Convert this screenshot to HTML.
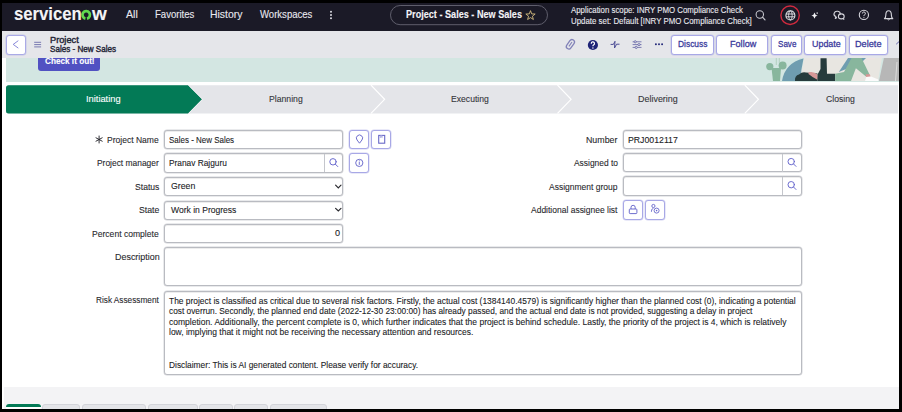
<!DOCTYPE html>
<html><head><meta charset="utf-8">
<style>
html,body{margin:0;padding:0;}
body{width:902px;height:412px;background:#000;position:relative;overflow:hidden;font-family:"Liberation Sans",sans-serif;}
.a{position:absolute;box-sizing:border-box;}
.t{position:absolute;line-height:0;transform-origin:0 0;white-space:pre;font-family:"Liberation Sans",sans-serif;-webkit-text-stroke:0.1px currentColor;}
.inp{position:absolute;box-sizing:border-box;background:#fff;border:1px solid #b9bbc1;border-radius:3px;box-shadow:inset 0 1px 0 rgba(0,0,0,0.07),0 0 0 0.5px rgba(185,187,193,0.6);}
.btn{position:absolute;box-sizing:border-box;background:#fff;border:1px solid #a8a8e6;border-radius:3px;box-shadow:0 0 0 0.5px rgba(168,168,230,0.5);}
svg{position:absolute;overflow:visible;}
</style></head><body>
<!-- nav -->
<div class="a" style="left:2px;top:3px;width:897px;height:28px;background:#1b1a27;"></div>
<!-- logo -->
<svg style="left:0;top:0" width="902" height="32">
  <!-- green o -->
  <path d="M85.42 18.57 A3.75 3.75 0 1 1 86.98 18.57" fill="none" stroke="#62d84e" stroke-width="2.8"/>
  <!-- kebab -->
  <circle cx="331" cy="11.7" r="0.95" fill="#e8e8ee"/>
  <circle cx="331" cy="15" r="0.95" fill="#e8e8ee"/>
  <circle cx="331" cy="18.3" r="0.95" fill="#e8e8ee"/>
  <!-- pill -->
  <rect x="390.5" y="5.5" width="157" height="19.2" rx="9.6" fill="none" stroke="#5f5e6c" stroke-width="1"/>
  <!-- star -->
  <path d="M530.50 10.65 L531.70 13.89 L535.16 14.04 L532.45 16.18 L533.38 19.51 L530.50 17.60 L527.62 19.51 L528.55 16.18 L525.84 14.04 L529.30 13.89 Z" fill="none" stroke="#cbb47a" stroke-width="0.95" stroke-linejoin="round"/>
  <!-- search -->
  <circle cx="759.8" cy="14.5" r="3.7" fill="none" stroke="#c9c9d0" stroke-width="1.05"/>
  <line x1="762.5" y1="17.2" x2="765.0" y2="19.9" stroke="#c9c9d0" stroke-width="1.2" stroke-linecap="round"/>
  <!-- globe w/ red ring -->
  <circle cx="790.1" cy="15.25" r="9.2" fill="none" stroke="#d02a3e" stroke-width="1.45"/>
  <circle cx="790.4" cy="15.4" r="4.5" fill="none" stroke="#e2e2e6" stroke-width="1.1"/>
  <ellipse cx="790.4" cy="15.4" rx="1.8" ry="4.5" fill="none" stroke="#e2e2e6" stroke-width="0.9"/>
  <line x1="786" y1="14.0" x2="794.8" y2="14.0" stroke="#e2e2e6" stroke-width="0.9"/>
  <line x1="786" y1="16.8" x2="794.8" y2="16.8" stroke="#e2e2e6" stroke-width="0.9"/>
  <!-- sparkle -->
  <path d="M814.5 12.5 Q815.0 15.1 817.6 15.6 Q815.0 16.1 814.5 18.7 Q814.0 16.1 811.4 15.6 Q814.0 15.1 814.5 12.5 Z" fill="#f2f2f5"/>
  <rect x="816.5" y="12.4" width="1.4" height="1.4" fill="#c9c9cf"/>
  <!-- chat bubbles -->
  <path d="M837.0 17.5 L835.3 18.4 L835.9 16.6 A3.1 2.8 0 1 1 840.2 14.4" fill="none" stroke="#d6d6dc" stroke-width="1.1" stroke-linejoin="round"/>
  <ellipse cx="841.3" cy="16.4" rx="2.9" ry="2.5" fill="none" stroke="#d6d6dc" stroke-width="1.1"/>
  <path d="M842.8 18.6 L843.8 19.6 L843.6 18.1" fill="none" stroke="#d6d6dc" stroke-width="1"/>
  <!-- help -->
  <circle cx="863.9" cy="14.9" r="4.6" fill="none" stroke="#d6d6dc" stroke-width="1.1"/>
  <path d="M862.4 13.5 A1.5 1.5 0 1 1 864.3 14.9 Q863.9 15.2 863.9 16.1" fill="none" stroke="#d6d6dc" stroke-width="1"/>
  <circle cx="863.9" cy="17.6" r="0.55" fill="#d6d6dc"/>
  <!-- bell -->
  <path d="M884.4 18.6 Q885.8 17.6 885.8 15.2 Q885.8 10.7 888.6 10.7 Q891.4 10.7 891.4 15.2 Q891.4 17.6 892.8 18.6 Z" fill="none" stroke="#d6d6dc" stroke-width="1.1" stroke-linejoin="round"/>
  <path d="M887.6 19.4 Q888.6 20.4 889.6 19.4" fill="none" stroke="#d6d6dc" stroke-width="1"/>
</svg>

<!-- header -->
<div class="a" style="left:2px;top:31px;width:897px;height:27px;background:#e5e6ea;"></div>
<div class="btn" style="left:5.6px;top:34.6px;width:20.2px;height:20px;border-color:#aaaae6;"></div>
<div class="btn" style="left:671.3px;top:34.8px;width:42.5px;height:19.8px;"></div>
<div class="btn" style="left:716.2px;top:34.8px;width:51.9px;height:19.8px;"></div>
<div class="btn" style="left:771.2px;top:34.8px;width:31.1px;height:19.8px;"></div>
<div class="btn" style="left:804.4px;top:34.8px;width:42.1px;height:19.8px;"></div>
<div class="btn" style="left:848.6px;top:34.8px;width:39.5px;height:19.8px;"></div>
<svg style="left:0;top:0" width="902" height="60">
  <!-- back chevron -->
  <path d="M18 40.9 L13.2 44.4 L18 47.9" fill="none" stroke="#7474d2" stroke-width="0.85" stroke-linecap="round" stroke-linejoin="round"/>
  <!-- hamburger -->
  <line x1="34.2" y1="42.3" x2="41.1" y2="42.3" stroke="#6c6cac" stroke-width="0.9"/>
  <line x1="34.2" y1="44.6" x2="41.1" y2="44.6" stroke="#6c6cac" stroke-width="0.9"/>
  <line x1="34.2" y1="46.9" x2="41.1" y2="46.9" stroke="#6c6cac" stroke-width="0.9"/>
  <!-- paperclip -->
  <g transform="translate(570.4 44.3) rotate(-55)"><rect x="-5.2" y="-2.5" width="10.4" height="5" rx="2.5" fill="none" stroke="#8282b8" stroke-width="1.3"/><line x1="-2.6" y1="0" x2="2.8" y2="0" stroke="#8282b8" stroke-width="1.1"/></g>
  <!-- help filled -->
  <circle cx="592.9" cy="45" r="5.1" fill="#1f2477"/>
  <path d="M591.3 43.7 A1.6 1.6 0 1 1 593.5 45.0 Q592.9 45.4 592.9 46.3" fill="none" stroke="#fff" stroke-width="1.2"/>
  <circle cx="592.9" cy="48" r="0.7" fill="#fff"/>
  <!-- activity -->
  <path d="M611.0 44.4 L613.4 44.4 L615.0 41.3 L614.5 48.0 L616.6 44.2 L619.1 44.2" fill="none" stroke="#4a4a94" stroke-width="1.0" stroke-linejoin="round" stroke-linecap="round"/>
  <!-- sliders -->
  <g stroke="#6262a4" stroke-width="0.8" fill="none">
    <line x1="632.6" y1="41.8" x2="641.5" y2="41.8"/>
    <line x1="632.6" y1="44.6" x2="641.5" y2="44.6"/>
    <line x1="632.6" y1="47.4" x2="641.5" y2="47.4"/>
    <circle cx="635.2" cy="41.8" r="1.1" fill="#e5e6ea"/>
    <circle cx="639.0" cy="44.6" r="1.1" fill="#e5e6ea"/>
    <circle cx="636.2" cy="47.4" r="1.1" fill="#e5e6ea"/>
  </g>
  <line x1="896.2" y1="44.2" x2="899.5" y2="41.2" stroke="#5a5aa8" stroke-width="0.9"/>
  <!-- ellipsis -->
  <circle cx="655.9" cy="44.2" r="0.95" fill="#1f2477"/>
  <circle cx="659.0" cy="44.2" r="0.95" fill="#1f2477"/>
  <circle cx="662.1" cy="44.2" r="0.95" fill="#1f2477"/>
</svg>

<!-- page white -->
<div class="a" style="left:2px;top:58px;width:897px;height:351px;background:#fff;"></div>
<!-- banner -->
<div class="a" style="left:6px;top:58px;width:893px;height:23.6px;background:#d3e6e2;overflow:hidden;">
  <div class="a" style="left:32.2px;top:-10px;width:61.4px;height:22.7px;background:#5151c2;border-radius:3px;"></div>
</div>
<svg style="left:0;top:0" width="902" height="82">
  <!-- illustration -->
  <polygon points="804,58 882,58 878,81 800,81" fill="#e8e6e1"/>
  <path d="M782 81 Q785 63 803.5 58.5 Q801 70 800 81 Z" fill="#6f9db0"/>
  <circle cx="769.8" cy="66.6" r="3.6" fill="#88b69d"/>
  <circle cx="782.6" cy="65.6" r="4.0" fill="#88b69d"/>
  <path d="M771.5 68 L781 68 L780 81 L773 81 Z" fill="#88b69d"/>
  <path d="M776.3 58 L776.3 65 M779.3 58 L779.3 63" stroke="#a9ccb8" stroke-width="0.8"/>
  <path d="M795 81 Q794.5 75.5 799 74.5 Q802 71.5 806 72.5 L817.5 73.5 L817.5 81 Z" fill="#263b3c"/>
  <path d="M808.5 72.2 Q814 71 817.5 74.5 L817.5 79.8 Q812 77 808.5 74 Z" fill="#d69797"/>
  <path d="M820.5 58.2 L826.6 58.2 L827 73.7 L835.2 73.7 L835.2 81 L817.4 81 L817.8 74 L820.5 69 Z" fill="#263b3c"/>
  <path d="M838.8 72 L848 58 L866 58 L861 63 Z" fill="#6f9db0"/>
  <path d="M835.2 73.7 L844 72 L851.5 58 L861.5 58 L869.5 74.5 L866 76.5 L855.9 68.2 L851 81 L835.2 81 Z" fill="#88b69d"/>
  <path d="M865.6 74.3 L869.9 74.3 L870.5 76.7 L866.2 76.9 Z" fill="#d69797"/>
  <path d="M866.2 76.9 L871 76.6 L878.4 79.5 L878.4 81 L865 81 Z" fill="#fbfbfb"/>
  <path d="M883.9 58 L899 58 L899 81 L879 81 Z" fill="#b7b7b7"/>
  <path d="M897 62 L895.5 81" stroke="#dcdcdc" stroke-width="1"/>
  <rect x="867" y="58" width="8" height="1.3" fill="#efe3e3"/>
</svg>

<!-- process flow -->
<svg style="left:0;top:0" width="902" height="120">
  <path d="M8.5 85.2 L898 85.2 L898 113.4 L8.5 113.4 Q6 113.4 6 110.9 L6 87.7 Q6 85.2 8.5 85.2 Z" fill="#e4e5e9"/>
  <path d="M8.5 85.2 L188 85.2 L202 99.3 L188 113.4 L8.5 113.4 Q6 113.4 6 110.9 L6 87.7 Q6 85.2 8.5 85.2 Z" fill="#037a56"/>
  <g fill="none" stroke="#ffffff" stroke-width="1.2">
    <path d="M188.6 85.2 L202.6 99.3 L188.6 113.4" stroke-width="0.8" stroke="#f4f4f6"/>
    <path d="M371 85.2 L384.6 99.3 L371 113.4"/>
    <path d="M557.5 85.2 L571.1 99.3 L557.5 113.4"/>
    <path d="M744.8 85.2 L758.4 99.3 L744.8 113.4"/>
  </g>
</svg>

<!-- form inputs left -->
<div class="inp" style="left:164.4px;top:130px;width:178.7px;height:19.3px;"></div>
<div class="inp" style="left:164.4px;top:153.4px;width:178.7px;height:19.3px;"></div>
<div class="a" style="left:324.3px;top:154.4px;width:1px;height:17.3px;background:#c4c6cc;"></div>
<div class="inp" style="left:164.4px;top:177.2px;width:178.6px;height:19.3px;"></div>
<div class="inp" style="left:164.4px;top:200.5px;width:178.6px;height:19.3px;"></div>
<div class="inp" style="left:164.4px;top:223.8px;width:178.6px;height:19.4px;"></div>
<div class="inp" style="left:164.3px;top:247px;width:637.7px;height:39px;"></div>
<div class="inp" style="left:164.3px;top:290.8px;width:637.6px;height:83.8px;"></div>
<!-- buttons left -->
<div class="btn" style="left:349.2px;top:129.7px;width:20px;height:19.6px;"></div>
<div class="btn" style="left:371.3px;top:129.7px;width:20.1px;height:19.6px;"></div>
<div class="btn" style="left:349.2px;top:153.1px;width:20px;height:19.6px;"></div>
<!-- right inputs -->
<div class="inp" style="left:623.1px;top:129.6px;width:178.8px;height:19.3px;"></div>
<div class="inp" style="left:623.1px;top:153.2px;width:178.8px;height:19.3px;"></div>
<div class="a" style="left:782.4px;top:154.3px;width:1px;height:17.3px;background:#c4c6cc;"></div>
<div class="inp" style="left:623.1px;top:176.3px;width:178.8px;height:19.3px;"></div>
<div class="a" style="left:782.4px;top:177.4px;width:1px;height:17.3px;background:#c4c6cc;"></div>
<div class="btn" style="left:623.3px;top:199.5px;width:19.5px;height:20px;"></div>
<div class="btn" style="left:645.3px;top:199.5px;width:19.7px;height:20px;"></div>

<svg style="left:0;top:0" width="902" height="230">
  <!-- asterisk -->
  <g stroke="#26262c" stroke-width="0.95" stroke-linecap="round">
    <line x1="99.1" y1="136.0" x2="99.1" y2="143.0"/>
    <line x1="96.0" y1="137.8" x2="102.2" y2="141.2"/>
    <line x1="96.0" y1="141.2" x2="102.2" y2="137.8"/>
  </g>
  <!-- magnifiers -->
  <g fill="none" stroke="#6464cc" stroke-width="0.95" stroke-linecap="round">
    <circle cx="333.0" cy="161.8" r="3.2"/>
    <line x1="335.4" y1="164.2" x2="337.8" y2="166.6"/>
    <circle cx="791.2" cy="161.6" r="3.2"/>
    <line x1="793.6" y1="164.0" x2="796.0" y2="166.4"/>
    <circle cx="791.2" cy="184.7" r="3.2"/>
    <line x1="793.6" y1="187.1" x2="796.0" y2="189.5"/>
  </g>
  <!-- lightbulb/pin -->
  <path d="M359.5 143.2 L357.04 139.98 A3.1 3.1 0 1 1 361.96 139.98 Z" fill="none" stroke="#6666ca" stroke-width="0.95" stroke-linejoin="round"/>
  <!-- book -->
  <rect x="378.7" y="135.4" width="6.0" height="7.8" fill="#fff" stroke="#6a6ac8" stroke-width="1.1"/>
  <path d="M380.2 135.6 L380.2 137.6 L381.2 137 L382.2 137.6 L382.2 135.6" fill="#c8c8ec" stroke="#8a8ad6" stroke-width="0.5"/>
  <!-- info -->
  <circle cx="359.3" cy="162.9" r="3.6" fill="none" stroke="#6666ca" stroke-width="0.95"/>
  <line x1="359.3" y1="161.6" x2="359.3" y2="164.9" stroke="#6666ca" stroke-width="0.9"/>
  <circle cx="359.3" cy="160.5" r="0.45" fill="#6666ca"/>
  <!-- select chevrons -->
  <path d="M335.6 185.1 L338.3 187.8 L341.0 185.1" fill="none" stroke="#2b2b30" stroke-width="1.2" stroke-linecap="round"/>
  <path d="M335.6 208.3 L338.3 211.0 L341.0 208.3" fill="none" stroke="#2b2b30" stroke-width="1.2" stroke-linecap="round"/>
  <!-- lock -->
  <path d="M631.0 209 L631.0 207.4 A2.1 2.1 0 0 1 635.2 207.4 L635.2 209" fill="none" stroke="#6666ca" stroke-width="0.95"/>
  <rect x="629.3" y="209" width="7.6" height="4.6" rx="0.8" fill="none" stroke="#6666ca" stroke-width="0.95"/>
  <!-- user gear -->
  <circle cx="653.4" cy="206.0" r="1.6" fill="none" stroke="#6666ca" stroke-width="0.9"/>
  <path d="M651.4 211.8 Q651.2 208.6 653.4 208.4" fill="none" stroke="#6666ca" stroke-width="0.9"/>
  <circle cx="656.6" cy="210.6" r="2.5" fill="none" stroke="#6666ca" stroke-width="0.9"/>
  <circle cx="656.6" cy="210.6" r="0.8" fill="#6666ca"/>
</svg>

<!-- bottom gray area -->
<div class="a" style="left:3.6px;top:387px;width:895.4px;height:22px;background:#f3f3f5;"></div>
<!-- tabs -->
<div class="a" style="left:6px;top:404.2px;width:34.7px;height:6px;background:#fff;border-top:3px solid #037a56;border-radius:3px 3px 0 0;"></div>
<div class="a" style="left:42.2px;top:403.8px;width:38.1px;height:6px;background:#e3e4e8;border:1px solid #d3d4da;border-radius:3px 3px 0 0;"></div>
<div class="a" style="left:81.8px;top:403.8px;width:64.4px;height:6px;background:#e3e4e8;border:1px solid #d3d4da;border-radius:3px 3px 0 0;"></div>
<div class="a" style="left:147.8px;top:403.8px;width:50.1px;height:6px;background:#e3e4e8;border:1px solid #d3d4da;border-radius:3px 3px 0 0;"></div>
<div class="a" style="left:199px;top:403.8px;width:33.6px;height:6px;background:#e3e4e8;border:1px solid #d3d4da;border-radius:3px 3px 0 0;"></div>
<div class="a" style="left:233.7px;top:403.8px;width:34.7px;height:6px;background:#e3e4e8;border:1px solid #d3d4da;border-radius:3px 3px 0 0;"></div>
<div class="a" style="left:269.5px;top:403.8px;width:57.7px;height:6px;background:#e3e4e8;border:1px solid #d3d4da;border-radius:3px 3px 0 0;"></div>
<!-- bottom frame -->
<div class="a" style="left:0;top:409px;width:902px;height:3px;background:#000;"></div>
<div class="a" style="left:899px;top:0;width:3px;height:412px;background:#000;"></div>

<div class="t" style="left:14.00px;top:13.96px;font-size:18.4px;font-weight:bold;color:#f4f4f6;transform:scaleX(0.9084);">servicen</div>
<div class="t" style="left:91.60px;top:13.96px;font-size:18.4px;font-weight:bold;color:#f4f4f6;transform:scaleX(1.0341);">w</div>
<div class="t" style="left:126.00px;top:15.33px;font-size:10.2px;font-weight:normal;color:#e9e9ef;transform:scaleX(1.0417);">All</div>
<div class="t" style="left:154.60px;top:15.33px;font-size:10.2px;font-weight:normal;color:#e9e9ef;transform:scaleX(0.9402);">Favorites</div>
<div class="t" style="left:210.30px;top:15.33px;font-size:10.2px;font-weight:normal;color:#e9e9ef;transform:scaleX(1.0220);">History</div>
<div class="t" style="left:259.90px;top:15.33px;font-size:10.2px;font-weight:normal;color:#e9e9ef;transform:scaleX(0.9378);">Workspaces</div>
<div class="t" style="left:405.90px;top:14.90px;font-size:10px;font-weight:bold;color:#f4f4f8;transform:scaleX(0.9114);">Project - Sales - New Sales</div>
<div class="t" style="left:571.10px;top:10.46px;font-size:8.4px;font-weight:normal;color:#e9e9ef;transform:scaleX(0.9346);">Application scope: INRY PMO Compliance Check</div>
<div class="t" style="left:571.10px;top:20.66px;font-size:8.4px;font-weight:normal;color:#e9e9ef;transform:scaleX(0.9397);">Update set: Default [INRY PMO Compliance Check]</div>
<div class="t" style="left:49.90px;top:39.61px;font-size:9.4px;font-weight:normal;color:#1f2435;transform:scaleX(0.9833);-webkit-text-stroke:0.4px currentColor;">Project</div>
<div class="t" style="left:49.90px;top:48.81px;font-size:9.4px;font-weight:normal;color:#1f2435;transform:scaleX(0.8630);-webkit-text-stroke:0.4px currentColor;">Sales - New Sales</div>
<div class="t" style="left:678.40px;top:44.47px;font-size:9.8px;font-weight:normal;color:#3a3a9c;transform:scaleX(0.8572);-webkit-text-stroke:0.3px currentColor;">Discuss</div>
<div class="t" style="left:729.60px;top:44.47px;font-size:9.8px;font-weight:normal;color:#3a3a9c;transform:scaleX(0.9289);-webkit-text-stroke:0.3px currentColor;">Follow</div>
<div class="t" style="left:777.70px;top:44.47px;font-size:9.8px;font-weight:normal;color:#3a3a9c;transform:scaleX(0.8235);-webkit-text-stroke:0.3px currentColor;">Save</div>
<div class="t" style="left:811.50px;top:44.47px;font-size:9.8px;font-weight:normal;color:#3a3a9c;transform:scaleX(0.9084);-webkit-text-stroke:0.3px currentColor;">Update</div>
<div class="t" style="left:855.40px;top:44.47px;font-size:9.8px;font-weight:normal;color:#3a3a9c;transform:scaleX(0.9355);-webkit-text-stroke:0.3px currentColor;">Delete</div>
<div class="t" style="left:44.60px;top:60.65px;font-size:9px;font-weight:bold;color:#ffffff;transform:scaleX(0.9098);">Check it out!</div>
<div class="t" style="left:85.90px;top:99.04px;font-size:9.6px;font-weight:normal;color:#ffffff;transform:scaleX(0.9683);">Initiating</div>
<div class="t" style="left:269.30px;top:99.04px;font-size:9.6px;font-weight:normal;color:#34353a;transform:scaleX(0.9024);">Planning</div>
<div class="t" style="left:451.30px;top:99.04px;font-size:9.6px;font-weight:normal;color:#34353a;transform:scaleX(0.8970);">Executing</div>
<div class="t" style="left:637.60px;top:99.04px;font-size:9.6px;font-weight:normal;color:#34353a;transform:scaleX(0.9327);">Delivering</div>
<div class="t" style="left:825.90px;top:99.04px;font-size:9.6px;font-weight:normal;color:#34353a;transform:scaleX(0.9031);">Closing</div>
<div class="t" style="left:107.10px;top:140.37px;font-size:9.8px;font-weight:normal;color:#27282c;transform:scaleX(0.8710);">Project Name</div>
<div class="t" style="left:97.00px;top:163.27px;font-size:9.8px;font-weight:normal;color:#27282c;transform:scaleX(0.8596);">Project manager</div>
<div class="t" style="left:134.70px;top:186.97px;font-size:9.8px;font-weight:normal;color:#27282c;transform:scaleX(0.8783);">Status</div>
<div class="t" style="left:138.70px;top:209.97px;font-size:9.8px;font-weight:normal;color:#27282c;transform:scaleX(0.8912);">State</div>
<div class="t" style="left:92.40px;top:233.67px;font-size:9.8px;font-weight:normal;color:#27282c;transform:scaleX(0.8748);">Percent complete</div>
<div class="t" style="left:114.50px;top:256.87px;font-size:9.8px;font-weight:normal;color:#27282c;transform:scaleX(0.9120);">Description</div>
<div class="t" style="left:96.40px;top:300.27px;font-size:9.8px;font-weight:normal;color:#27282c;transform:scaleX(0.8419);">Risk Assessment</div>
<div class="t" style="left:586.10px;top:140.17px;font-size:9.8px;font-weight:normal;color:#27282c;transform:scaleX(0.9008);">Number</div>
<div class="t" style="left:573.50px;top:163.07px;font-size:9.8px;font-weight:normal;color:#27282c;transform:scaleX(0.8593);">Assigned to</div>
<div class="t" style="left:549.00px;top:186.67px;font-size:9.8px;font-weight:normal;color:#27282c;transform:scaleX(0.8674);">Assignment group</div>
<div class="t" style="left:531.10px;top:209.57px;font-size:9.8px;font-weight:normal;color:#27282c;transform:scaleX(0.8668);">Additional assignee list</div>
<div class="t" style="left:168.90px;top:139.77px;font-size:9.8px;font-weight:normal;color:#202124;transform:scaleX(0.8133);">Sales - New Sales</div>
<div class="t" style="left:169.10px;top:162.87px;font-size:9.8px;font-weight:normal;color:#202124;transform:scaleX(0.8505);">Pranav Rajguru</div>
<div class="t" style="left:171.40px;top:186.37px;font-size:9.8px;font-weight:normal;color:#202124;transform:scaleX(0.8923);">Green</div>
<div class="t" style="left:171.40px;top:209.67px;font-size:9.8px;font-weight:normal;color:#202124;transform:scaleX(0.8725);">Work in Progress</div>
<div class="t" style="left:627.80px;top:139.77px;font-size:9.8px;font-weight:normal;color:#202124;transform:scaleX(0.8905);">PRJ0012117</div>
<div class="t" style="left:335.33px;top:233.37px;font-size:9.8px;font-weight:normal;color:#202124;transform:scaleX(0.9300);">0</div>
<div class="t" style="left:169.20px;top:300.57px;font-size:9.8px;font-weight:normal;color:#202124;transform:scaleX(0.8583);">The project is classified as critical due to several risk factors. Firstly, the actual cost (1384140.4579) is significantly higher than the planned cost (0), indicating a potential</div>
<div class="t" style="left:169.20px;top:310.87px;font-size:9.8px;font-weight:normal;color:#202124;transform:scaleX(0.8477);">cost overrun. Secondly, the planned end date (2022-12-30 23:00:00) has already passed, and the actual end date is not provided, suggesting a delay in project</div>
<div class="t" style="left:169.20px;top:321.57px;font-size:9.8px;font-weight:normal;color:#202124;transform:scaleX(0.8680);">completion. Additionally, the percent complete is 0, which further indicates that the project is behind schedule. Lastly, the priority of the project is 4, which is relatively</div>
<div class="t" style="left:169.20px;top:332.07px;font-size:9.8px;font-weight:normal;color:#202124;transform:scaleX(0.8639);">low, implying that it might not be receiving the necessary attention and resources.</div>
<div class="t" style="left:169.20px;top:364.87px;font-size:9.8px;font-weight:normal;color:#202124;transform:scaleX(0.8529);">Disclaimer: This is AI generated content. Please verify for accuracy.</div>
</body></html>
